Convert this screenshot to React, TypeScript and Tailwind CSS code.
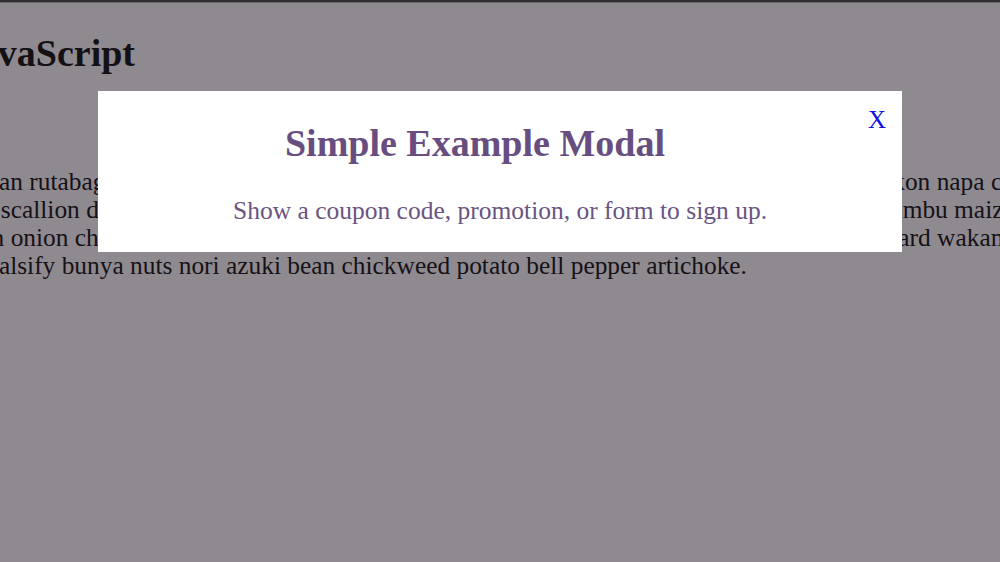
import React from "react";

const serif = "font-['Liberation_Serif','Times_New_Roman',serif]";

export default function App() {
  return (
    <div className={`relative h-[562px] w-[1000px] overflow-hidden bg-[#8f8a90] ${serif}`}>
      {/* window edge */}
      <div className="h-[2px] bg-[#2f2d30]" />
      <div className="h-[1px] bg-[#6a666c]" />

      {/* page content behind the modal */}
      <div className="pt-[31px]">
        <div className="flex w-[135px] justify-end whitespace-nowrap">
          <h1 className="shrink-0 text-[38px] font-bold leading-none text-[#141115]">
            Modal in JavaScript
          </h1>
        </div>

        <div className="mt-[95px] text-[25.4px] leading-[28px] text-[#151116]">
          <div className="ml-[-63px] whitespace-nowrap">
            ricebean rutabaga endive cauliflower sea lettuce kohlrabi amaranth water spinach avocado daikon napa cabbage asparagus
          </div>
          <div className="ml-[-69px] whitespace-nowrap">
            potato scallion desert raisin horseradish spinach carrot soko. Lotus root water spinach fennel kombu maize bamboo shoot
          </div>
          <div className="ml-[-86px] whitespace-nowrap">
            pumpkin onion chickpea gram corn pea. Brussels sprout coriander water chestnut gourd swiss chard wakame kohlrabi
          </div>
          <div className="ml-[-11px] whitespace-nowrap">
            salsify bunya nuts nori azuki bean chickweed potato bell pepper artichoke.
          </div>
        </div>
      </div>

      {/* modal layer */}
      <div className="absolute inset-0 flex items-start justify-center pt-[91px]">
        <div className="w-[804px] bg-white pt-[16px] pb-[28px]">
          <button className="float-right cursor-pointer px-[16px] text-[25px] leading-none text-[#1212e0]">
            X
          </button>
          <h2 className="mt-[17px] text-center text-[38px] font-bold leading-none text-[#684e80]">
            Simple Example Modal
          </h2>
          <p className="mt-[36px] text-center text-[25.5px] leading-none text-[#6a5482]">
            Show a coupon code, promotion, or form to sign up.
          </p>
        </div>
      </div>
    </div>
  );
}
